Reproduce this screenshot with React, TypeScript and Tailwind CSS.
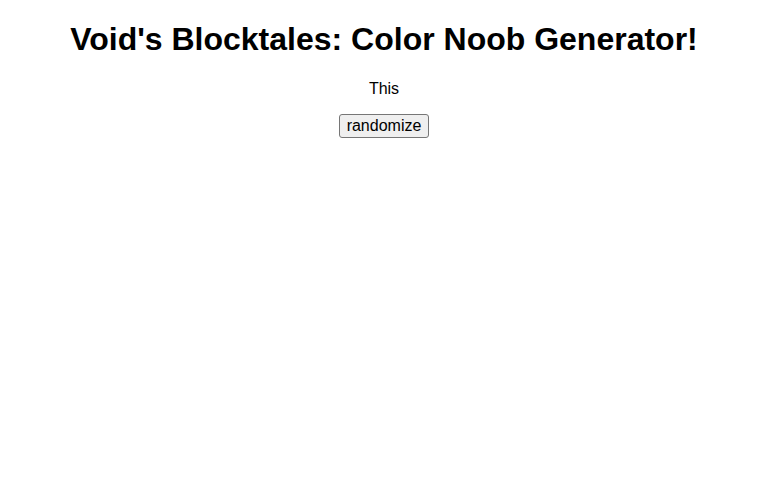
export default function App() {
  return (
    <div className="min-h-[480px] bg-white px-2 text-center font-['Liberation_Sans',Arial,sans-serif] text-base leading-[normal] text-black">
      <h1 className="my-[21.44px] pt-0 text-[32px] font-bold leading-[normal]">
        Void's Blocktales: Color Noob Generator!
      </h1>
      <p className="my-4">This</p>
      <p className="my-4">
        <button className="rounded-[3px] border border-[#767676] bg-[#efefef] px-[7px] py-[2px] text-base leading-[normal] text-black">
          randomize
        </button>
      </p>
    </div>
  );
}
